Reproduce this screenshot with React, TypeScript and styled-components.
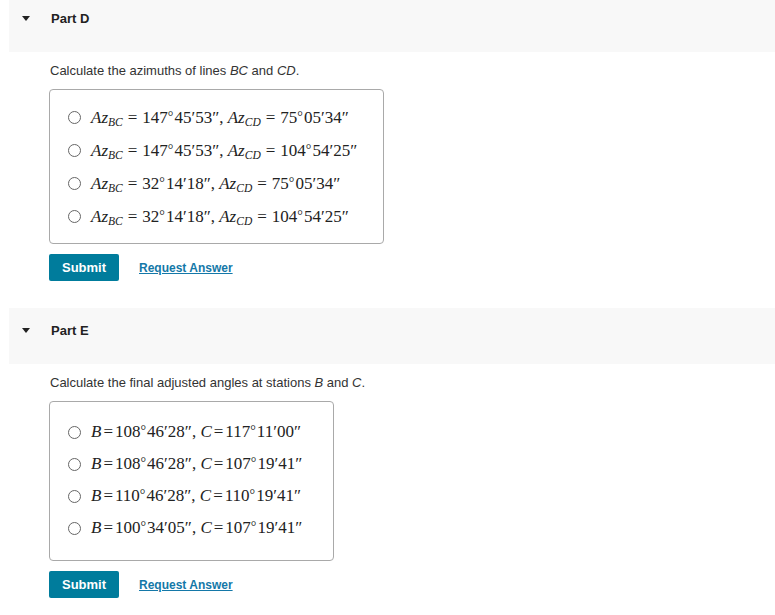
import React from 'react';
import styled, { createGlobalStyle } from 'styled-components';

const GlobalStyle = createGlobalStyle`
  * { box-sizing: border-box; }
  body {
    margin: 0;
    background: #fff;
    font-family: "Liberation Sans", Arial, sans-serif;
    color: #333;
  }
`;

interface Option {
  key: string;
  content: React.ReactNode;
}

interface PartProps {
  title: string;
  question: React.ReactNode;
  options: Option[];
  first?: boolean;
  rowHeight: number;
  pad: string;
}

const V = ({ children }: { children: React.ReactNode }) => <Var>{children}</Var>;

const Az = ({ sub }: { sub: string }) => (
  <>
    <V>Az</V>
    <Sub>{sub}</Sub>
  </>
);

const Part = ({ title, question, options, first, rowHeight, pad }: PartProps) => (
  <Section $first={first}>
    <Header>
      <Caret />
      <Title>{title}</Title>
    </Header>
    <Body>
      <Question>{question}</Question>
      <Choices $pad={pad}>
        {options.map((o) => (
          <ChoiceRow key={o.key} $h={rowHeight}>
            <Radio />
            <Math>{o.content}</Math>
          </ChoiceRow>
        ))}
      </Choices>
      <Actions>
        <SubmitButton>Submit</SubmitButton>
        <RequestLink href="#">Request Answer</RequestLink>
      </Actions>
    </Body>
  </Section>
);

const deg = (d: string, m: string, s: string) => (
  <>
    {d}
    <Deg>°</Deg>
    {m}′{s}″
  </>
);

export default function App() {
  const partD: Option[] = [
    ['147', '45', '53', '75', '05', '34'],
    ['147', '45', '53', '104', '54', '25'],
    ['32', '14', '18', '75', '05', '34'],
    ['32', '14', '18', '104', '54', '25'],
  ].map((v, i) => ({
    key: 'd' + i,
    content: (
      <>
        <Az sub="BC" />
        <Eq>=</Eq>
        {deg(v[0], v[1], v[2])},{' '}
        <Az sub="CD" />
        <Eq>=</Eq>
        {deg(v[3], v[4], v[5])}
      </>
    ),
  }));

  const partE: Option[] = [
    ['108', '46', '28', '117', '11', '00'],
    ['108', '46', '28', '107', '19', '41'],
    ['110', '46', '28', '110', '19', '41'],
    ['100', '34', '05', '107', '19', '41'],
  ].map((v, i) => ({
    key: 'e' + i,
    content: (
      <>
        <V>B</V>
        <Eq $tight>=</Eq>
        {deg(v[0], v[1], v[2])},{' '}
        <V>C</V>
        <Eq $tight>=</Eq>
        {deg(v[3], v[4], v[5])}
      </>
    ),
  }));

  return (
    <>
      <GlobalStyle />
      <Page>
        <Part
          first
          title="Part D"
          rowHeight={33}
          pad="11px 26px 10px 18px"
          question={
            <>
              Calculate the azimuths of lines <i>BC</i> and <i>CD</i>.
            </>
          }
          options={partD}
        />
        <Part
          title="Part E"
          rowHeight={32}
          pad="14px 31px 16px 18px"
          question={
            <>
              Calculate the final adjusted angles at stations <i>B</i> and <i>C</i>.
            </>
          }
          options={partE}
        />
      </Page>
    </>
  );
}

const Page = styled.div`
  padding-left: 9px;
`;

const Section = styled.section<{ $first?: boolean }>`
  margin-top: ${(p) => (p.$first ? '-4px' : '27px')};
`;

const Header = styled.div`
  display: flex;
  align-items: center;
  height: 56px;
  background: #f8f8f8;
  padding: 0 0 12px 13px;
`;

const Caret = styled.span`
  width: 0;
  height: 0;
  border-left: 4.5px solid transparent;
  border-right: 4.5px solid transparent;
  border-top: 5px solid #222;
  margin-right: 21px;
`;

const Title = styled.h3`
  margin: 0;
  font-size: 13px;
  font-weight: 700;
  color: #222;
`;

const Body = styled.div`
  padding-left: 40px;
`;

const Question = styled.p`
  margin: 11px 0 0 1px;
  font-size: 13px;
  line-height: 15px;
  color: #333;

  i {
    font-style: italic;
  }
`;

const Choices = styled.div<{ $pad: string }>`
  display: inline-flex;
  flex-direction: column;
  margin-top: 11px;
  padding: ${(p) => p.$pad};
  border: 1px solid #a9a9a9;
  border-radius: 4px;
`;

const ChoiceRow = styled.div<{ $h: number }>`
  display: flex;
  align-items: center;
  height: ${(p) => p.$h}px;
`;

const Radio = styled.span`
  width: 13px;
  height: 13px;
  border: 1px solid #666;
  border-radius: 50%;
  margin-right: 10px;
  flex-shrink: 0;
`;

const Math = styled.span`
  font-family: "Liberation Serif", "Times New Roman", serif;
  font-size: 17px;
  color: #222;
  white-space: nowrap;
`;

const Var = styled.span`
  font-style: italic;
`;

const Sub = styled.sub`
  font-style: italic;
  font-size: 11.5px;
  vertical-align: -3px;
`;

const Deg = styled.span`
  font-size: 14px;
  position: relative;
  top: -2px;
  margin-right: 1px;
`;

const Eq = styled.span<{ $tight?: boolean }>`
  margin: ${(p) => (p.$tight ? '0 2px' : '0 5px')};
`;

const Actions = styled.div`
  display: flex;
  align-items: center;
  gap: 20px;
  margin-top: 10px;
`;

const SubmitButton = styled.button`
  width: 70px;
  height: 27px;
  border: none;
  border-radius: 2px;
  background: #007c9c;
  color: #fff;
  font-family: "Liberation Sans", Arial, sans-serif;
  font-size: 13px;
  font-weight: 700;
  padding: 0;
`;

const RequestLink = styled.a`
  color: #1478a8;
  font-size: 12px;
  font-weight: 700;
  text-decoration: underline;
`;
